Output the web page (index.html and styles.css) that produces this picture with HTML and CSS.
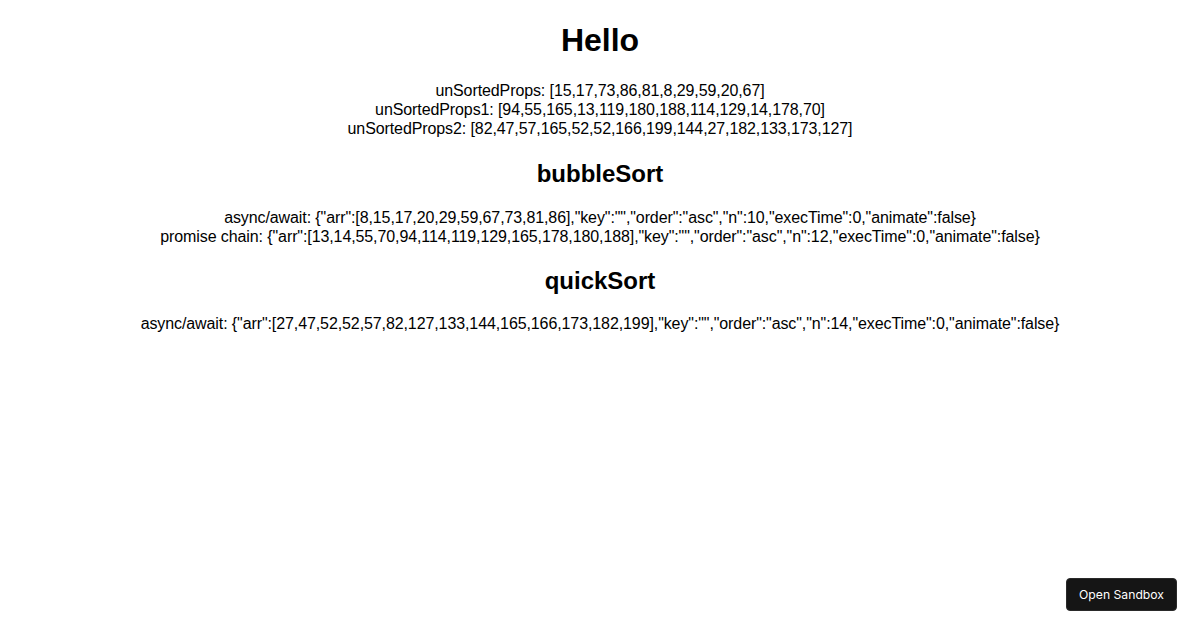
FILE: index.html
```html
<!DOCTYPE html>
<html>
<head>
<meta charset="utf-8">
<link rel="stylesheet" href="styles.css">
</head>
<body>
<div class="app">
  <h1>Hello</h1>
  <div>unSortedProps: [15,17,73,86,81,8,29,59,20,67]</div>
  <div>unSortedProps1: [94,55,165,13,119,180,188,114,129,14,178,70]</div>
  <div>unSortedProps2: [82,47,57,165,52,52,166,199,144,27,182,133,173,127]</div>
  <h2>bubbleSort</h2>
  <div>async/await: {"arr":[8,15,17,20,29,59,67,73,81,86],"key":"","order":"asc","n":10,"execTime":0,"animate":false}</div>
  <div>promise chain: {"arr":[13,14,55,70,94,114,119,129,165,178,180,188],"key":"","order":"asc","n":12,"execTime":0,"animate":false}</div>
  <h2 class="second">quickSort</h2>
  <div>async/await: {"arr":[27,47,52,52,57,82,127,133,144,165,166,173,182,199],"key":"","order":"asc","n":14,"execTime":0,"animate":false}</div>
</div>
<a class="open-sandbox">Open Sandbox</a>
</body>
</html>
```

FILE: styles.css
```css
body {
  margin: 0;
  padding: 1px 8px 8px;
  font-family: "Liberation Sans", Arial, sans-serif;
  font-size: 16px;
  color: #000;
  background: #fff;
}
.app {
  text-align: center;
  line-height: 19px;
  letter-spacing: -0.1px;
}
.app h1 {
  font-size: 32px;
  line-height: 37px;
  letter-spacing: 0;
  margin: 21px 0 22px;
}
.app h2 {
  font-size: 24px;
  line-height: 29px;
  letter-spacing: 0;
  margin: 21px 0 20px;
}
.app h2.second {
  margin: 20px 0 19px;
}
.open-sandbox {
  position: fixed;
  right: 23px;
  bottom: 19px;
  width: 111px;
  height: 33px;
  box-sizing: border-box;
  display: flex;
  align-items: center;
  justify-content: center;
  background: #151515;
  color: #fff;
  border: 1px solid #2a2a2a;
  border-radius: 4px;
  font-family: Inter, "Liberation Sans", sans-serif;
  font-size: 12.2px;
  text-decoration: none;
}
```
